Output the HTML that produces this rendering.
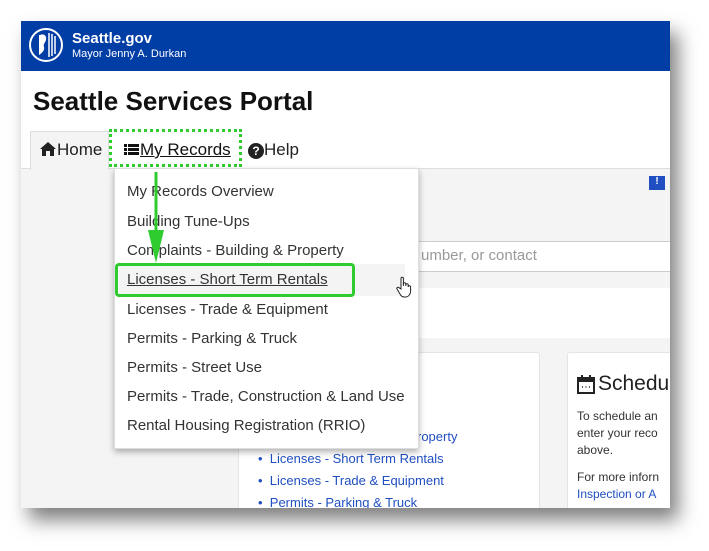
<!DOCTYPE html><html><head><style>
body{margin:0;width:709px;height:551px;background:#fff;position:relative;overflow:hidden;font-family:"Liberation Sans",sans-serif}
.shot{position:absolute;left:21px;top:21px;width:649px;height:487px;background:#f4f4f4;overflow:hidden;box-shadow:8px 12px 18px rgba(0,0,0,.5)}
.hdr{position:absolute;left:0;top:0;width:649px;height:50px;background:#003da5;border-bottom:1px solid #6a8cd0}
.wh{position:absolute;left:0;top:50px;width:649px;height:97px;background:#fff;border-bottom:1px solid #ddd}
.a{position:absolute;white-space:nowrap}
.dd{position:absolute;left:93px;top:147px;width:303px;height:279px;background:#fff;box-shadow:0 3px 6px rgba(0,0,0,.3);border:1px solid #ddd}
.dd div{position:absolute;left:12px;font-size:15px;color:#333}
.card{position:absolute;background:#fff;border:1px solid #e4e4e4;border-radius:3px}
.lk{color:#1f4fc1;font-size:13px}
</style></head><body>
<div class="shot">
<div class="hdr">
<svg class="a" style="left:7px;top:6px" width="36" height="36" viewBox="0 0 36 36"><circle cx="18" cy="18" r="16" fill="none" stroke="#fff" stroke-width="2"/><path d="M12 8c4-2 7 1 6 5-1 3-3 4-2 7 1 3-2 6-5 8V8z" fill="#fff"/><path d="M21 6v24M24 7v22M27 9v18" stroke="#fff" stroke-width="1.5"/></svg>
<div class="a" style="left:51px;top:9px;color:#fff;font-weight:bold;font-size:15px">Seattle.gov</div>
<div class="a" style="left:51px;top:27px;color:#fff;font-size:11px">Mayor Jenny A. Durkan</div>
</div>
<div class="wh"></div>
<div class="a" style="left:12px;top:65px;font-size:26px;font-weight:bold;color:#111">Seattle Services Portal</div>
<div class="a" style="left:9px;top:110px;width:77px;height:38px;background:#f4f4f4;border:1px solid #ddd;border-bottom:none"></div>
<svg class="a" style="left:19px;top:121px" width="16" height="14" viewBox="0 0 16 14"><path d="M8 0L0 7h2v7h4V9h4v5h4V7h2z" fill="#222"/></svg>
<div class="a" style="left:36px;top:119px;font-size:17px;color:#222">Home</div>
<div class="a" style="left:88px;top:108px;width:133px;height:38px;border:3px dotted #2ecc2e;box-sizing:border-box"></div>
<svg class="a" style="left:103px;top:123px" width="15" height="11"><path d="M0 0h3v3H0zM4 0h11v3H4zM0 4h3v3H0zM4 4h11v3H4zM0 8h3v3H0zM4 8h11v3H4z" fill="#111"/></svg>
<div class="a" style="left:119px;top:119px;font-size:17px;color:#111"><u>My Records</u></div>
<div class="a" style="left:227px;top:119px;font-size:17px;color:#222"><span style="display:inline-block;width:16px;height:16px;border-radius:8px;background:#222;color:#fff;font-size:12px;text-align:center;line-height:16px;font-weight:bold">?</span>Help</div>
<div class="a" style="left:628px;top:155px;width:16px;height:14px;background:#1f4fc1;color:#fff;font-size:10px;text-align:center;font-weight:bold">!</div>
<div class="a" style="left:396px;top:220px;width:253px;height:29px;background:#fff;border:1px solid #ccc"></div>
<div class="a" style="left:400px;top:226px;font-size:15px;color:#999">umber, or contact</div>
<div class="a" style="left:396px;top:267px;width:253px;height:50px;background:#fff"></div>
<div class="card" style="left:217px;top:331px;width:300px;height:170px"></div>
<div class="card" style="left:546px;top:331px;width:110px;height:170px"></div>
<svg class="a" style="left:556px;top:354px" width="18" height="19"><rect x="1" y="3" width="16" height="15" fill="none" stroke="#222" stroke-width="2"/><rect x="1" y="3" width="16" height="4" fill="#222"/><path d="M5 0v4M13 0v4" stroke="#222" stroke-width="2"/><path d="M5 12h1M8.5 12h1M12 12h1" stroke="#222" stroke-width="1.5"/></svg>
<div class="a" style="left:577px;top:351px;font-size:21px;color:#222">Schedu</div>
<div class="a" style="left:556px;top:387px;font-size:12px;color:#333;line-height:17px">To schedule an<br>enter your reco<br>above.</div>
<div class="a" style="left:556px;top:448px;font-size:12px;color:#333;line-height:17px">For more inforn<br><span style="color:#1f4fc1">Inspection or A</span></div>
<div class="a lk" style="left:396px;top:408px">roperty</div>
<div class="a lk" style="left:237px;top:430px">•&nbsp; Licenses - Short Term Rentals</div>
<div class="a lk" style="left:237px;top:452px">•&nbsp; Licenses - Trade &amp; Equipment</div>
<div class="a lk" style="left:237px;top:474px">•&nbsp; Permits - Parking &amp; Truck</div>
<div class="dd">
<div style="top:14px">My Records Overview</div>
<div style="top:44px">Building Tune-Ups</div>
<div style="top:73px">Complaints - Building &amp; Property</div>
<div style="left:4px;top:95px;width:286px;height:32px;background:#f4f4f4"></div>
<div style="top:102px"><u>Licenses - Short Term Rentals</u></div>
<div style="top:132px">Licenses - Trade &amp; Equipment</div>
<div style="top:161px">Permits - Parking &amp; Truck</div>
<div style="top:190px">Permits - Street Use</div>
<div style="top:219px">Permits - Trade, Construction &amp; Land Use</div>
<div style="top:248px">Rental Housing Registration (RRIO)</div>
</div>
<div class="a" style="left:94px;top:242px;width:240px;height:34px;border:3px solid #2ecc2e;border-radius:4px;box-sizing:border-box"></div>
<svg class="a" style="left:123px;top:151px" width="24" height="92"><path d="M12 0V66" stroke="#2ecc2e" stroke-width="3"/><path d="M4 58L12 91L20 58Z" fill="#2ecc2e"/></svg>
<svg class="a" style="left:375px;top:255px" width="16" height="22" viewBox="0 0 16 22"><path d="M5 13V2.5a1.2 1.2 0 0 1 2.4 0V10V8a1.2 1.2 0 0 1 2.4 0v2V9a1.2 1.2 0 0 1 2.4 0v2a1.2 1.2 0 0 1 2.4 0v4c0 3-2 6-5 6H8c-2 0-3-1-4-3l-3-5a1.2 1.2 0 0 1 2-1.3z" fill="#fff" stroke="#222" stroke-width="1"/></svg>
</div>
</body></html>
